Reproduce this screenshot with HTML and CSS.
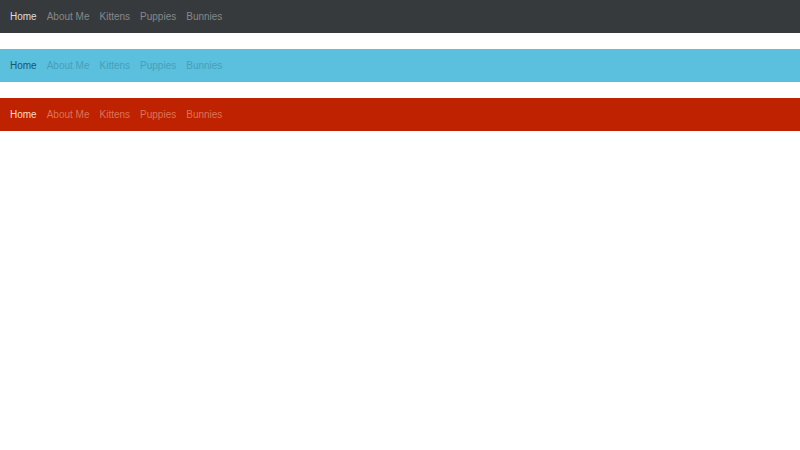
FILE: index.html
```html
<!DOCTYPE html>
<html lang="en">
<head>
    <meta charset="utf-8">
    <title>Home</title>
    <link rel="stylesheet" href="styles.css">
</head>
<body>
    <nav class="navbar navbar-dark" aria-label="Dark menu">
        <ul class="nav-list">
            <li><a class="nav-link active" href="#">Home</a></li>
            <li><a class="nav-link" href="#">About Me</a></li>
            <li><a class="nav-link" href="#">Kittens</a></li>
            <li><a class="nav-link" href="#">Puppies</a></li>
            <li><a class="nav-link" href="#">Bunnies</a></li>
        </ul>
    </nav>

    <nav class="navbar navbar-blue" aria-label="Blue menu">
        <ul class="nav-list">
            <li><a class="nav-link active" href="#">Home</a></li>
            <li><a class="nav-link" href="#">About Me</a></li>
            <li><a class="nav-link" href="#">Kittens</a></li>
            <li><a class="nav-link" href="#">Puppies</a></li>
            <li><a class="nav-link" href="#">Bunnies</a></li>
        </ul>
    </nav>

    <nav class="navbar navbar-red" aria-label="Red menu">
        <ul class="nav-list">
            <li><a class="nav-link active" href="#">Home</a></li>
            <li><a class="nav-link" href="#">About Me</a></li>
            <li><a class="nav-link" href="#">Kittens</a></li>
            <li><a class="nav-link" href="#">Puppies</a></li>
            <li><a class="nav-link" href="#">Bunnies</a></li>
        </ul>
    </nav>
</body>
</html>
```
FILE: styles.css
```css
body {
    margin: 0;
    background-color: #fff;
    font-family: "Liberation Sans", Arial, sans-serif;
    font-size: 10px;
    line-height: 15px;
}

/* Menu bars */
.navbar {
    padding: 9px 10px;
    margin-bottom: 16px;
}

.nav-list {
    display: flex;
    flex-wrap: wrap;
    gap: 10px;
    margin: 0;
    padding: 0;
    list-style: none;
}

.nav-link {
    display: block;
    text-decoration: none;
}

/* Dark bar */
.navbar-dark {
    background-color: #373a3c;
}

.navbar-dark .nav-link {
    color: #85888a;
}

.navbar-dark .active {
    color: #dcdcde;
}

/* Blue bar */
.navbar-blue {
    background-color: #5bbfde;
}

.navbar-blue .nav-link {
    color: #479fba;
}

.navbar-blue .active {
    color: #17566e;
}

/* Red bar */
.navbar-red {
    background-color: #bf2200;
}

.navbar-red .nav-link {
    color: #dd7357;
}

.navbar-red .active {
    color: #fbd8cb;
}
```
